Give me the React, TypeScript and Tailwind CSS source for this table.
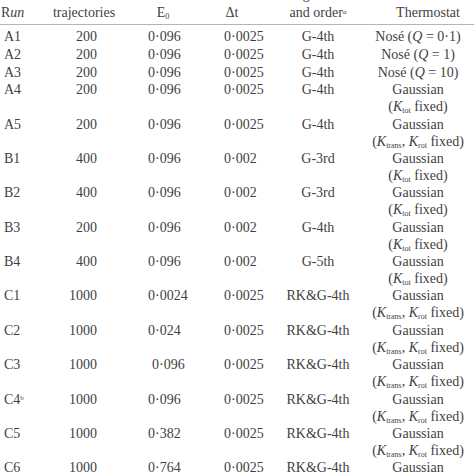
import React from "react";

type Row = {
  run: React.ReactNode;
  n: string;
  e: string;
  eIndent?: boolean;
  dt: string;
  alg: string;
  th: React.ReactNode;
  th2?: React.ReactNode;
};

const Ktot = (
  <span>
    (<i>K</i>
    <sub className="text-[8px] not-italic">tot</sub> fixed)
  </span>
);
const Ktr = (
  <span>
    (<i>K</i>
    <sub className="text-[8px]">trans</sub>, <i>K</i>
    <sub className="text-[8px]">rot</sub> fixed)
  </span>
);

const rows: Row[] = [
  { run: "A1", n: "200", e: "0·096", dt: "0·0025", alg: "G-4th", th: <span>Nosé (<i>Q</i> = 0·1)</span> },
  { run: "A2", n: "200", e: "0·096", dt: "0·0025", alg: "G-4th", th: <span>Nosé (<i>Q</i> = 1)</span> },
  { run: "A3", n: "200", e: "0·096", dt: "0·0025", alg: "G-4th", th: <span>Nosé (<i>Q</i> = 10)</span> },
  { run: "A4", n: "200", e: "0·096", dt: "0·0025", alg: "G-4th", th: "Gaussian", th2: Ktot },
  { run: "A5", n: "200", e: "0·096", dt: "0·0025", alg: "G-4th", th: "Gaussian", th2: Ktr },
  { run: "B1", n: "400", e: "0·096", dt: "0·002", alg: "G-3rd", th: "Gaussian", th2: Ktot },
  { run: "B2", n: "400", e: "0·096", dt: "0·002", alg: "G-3rd", th: "Gaussian", th2: Ktot },
  { run: "B3", n: "200", e: "0·096", dt: "0·002", alg: "G-4th", th: "Gaussian", th2: Ktot },
  { run: "B4", n: "400", e: "0·096", dt: "0·002", alg: "G-5th", th: "Gaussian", th2: Ktot },
  { run: "C1", n: "1000", e: "0·0024", dt: "0·0025", alg: "RK&G-4th", th: "Gaussian", th2: Ktr },
  { run: "C2", n: "1000", e: "0·024", dt: "0·0025", alg: "RK&G-4th", th: "Gaussian", th2: Ktr },
  { run: "C3", n: "1000", e: "0·096", eIndent: true, dt: "0·0025", alg: "RK&G-4th", th: "Gaussian", th2: Ktr },
  {
    run: (
      <span>
        C4<sup className="text-[7px]">b</sup>
      </span>
    ),
    n: "1000",
    e: "0·096",
    dt: "0·0025",
    alg: "RK&G-4th",
    th: "Gaussian",
    th2: Ktr,
  },
  { run: "C5", n: "1000", e: "0·382", dt: "0·0025", alg: "RK&G-4th", th: "Gaussian", th2: Ktr },
  { run: "C6", n: "1000", e: "0·764", dt: "0·0025", alg: "RK&G-4th", th: "Gaussian", th2: Ktr },
];

export default function App() {
  return (
    <div
      className="w-[474px] h-[474px] overflow-hidden bg-white text-[#3f3f3f] text-[14px]"
      style={{ fontFamily: '"Liberation Serif", "Times New Roman", serif' }}
    >
      <div className="w-[490px] -mt-[14px]">
        {/* header */}
        <div className="grid grid-cols-[40px_88px_70px_68px_104px_116px] leading-[18px] pb-[2px]">
          <div className="flex items-end pl-[1px]">
            <span>
              R<i>un</i>
            </span>
          </div>
          <div className="flex flex-col items-center">
            <span>Number of</span>
            <span>trajectories</span>
          </div>
          <div className="flex items-end justify-center">
            <span>
              E<sub className="text-[8px]">0</sub>
            </span>
          </div>
          <div className="flex items-end justify-center">Δt</div>
          <div className="flex flex-col items-center">
            <span>Algorithm</span>
            <span>
              and order<sup className="text-[7px] italic">a</sup>
            </span>
          </div>
          <div className="flex items-end justify-center">Thermostat</div>
        </div>
        <div className="h-px bg-[#b5b5b5] w-[474px]" />
        <div className="pt-[2px]">
          {rows.map((r, i) => (
            <div
              key={i}
              className={
                "grid grid-cols-[50px_50px_124px_56px_76px_124px] leading-[17px] " +
                (r.th2 ? "py-[0.2px]" : "py-[0.5px]")
              }
            >
              <div className="pl-[4px]">{r.run}</div>
              <div className="text-right pr-[3px]">{r.n}</div>
              <div className={r.eIndent ? "pl-[52px]" : "pl-[48px]"}>{r.e}</div>
              <div>{r.dt}</div>
              <div className="text-center">{r.alg}</div>
              <div className="flex flex-col items-center whitespace-nowrap">
                <span>{r.th}</span>
                {r.th2 && <span>{r.th2}</span>}
              </div>
            </div>
          ))}
        </div>
      </div>
    </div>
  );
}
